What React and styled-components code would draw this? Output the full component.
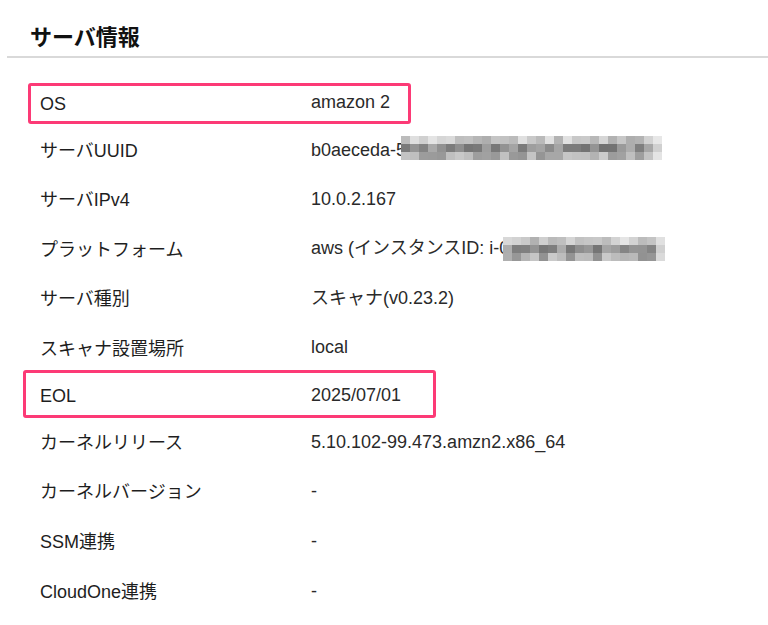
import React from "react";
import styled, { createGlobalStyle } from "styled-components";

const GlobalStyle = createGlobalStyle`
  body {
    margin: 0;
    background: #ffffff;
    font-family: "Liberation Sans", "Noto Sans CJK JP", sans-serif;
    color: #222;
  }
`;

const Page = styled.div`
  width: 768px;
  height: 625px;
  padding-top: 23px;
  box-sizing: border-box;
  overflow: hidden;
`;

const Title = styled.h2`
  margin: 0 0 0 30px;
  font-size: 22px;
  line-height: 30px;
  font-weight: 700;
  color: #111;
`;

const Divider = styled.div`
  margin: 3px 0 0 7px;
  height: 2px;
  background: #d9d9d9;
`;

const List = styled.div`
  margin-top: 22px;
`;

const Row = styled.div`
  position: relative;
  display: grid;
  grid-template-columns: 271px 1fr;
  align-items: center;
  height: ${(p) => p.$h}px;
  padding-left: 40px;
  font-size: 18px;
  line-height: 22px;
  white-space: nowrap;
`;

const Label = styled.div`
  color: #1e1e1e;
`;

const Value = styled.div`
  color: #2a2a2a;
  display: flex;
  align-items: center;
  padding-bottom: 3px;
`;

const Highlight = styled.div`
  position: absolute;
  left: ${(p) => p.$left}px;
  top: ${(p) => p.$top}px;
  width: ${(p) => p.$width}px;
  height: ${(p) => p.$height}px;
  border: 3px solid #fc3a76;
  border-radius: 3px;
  box-sizing: border-box;
  pointer-events: none;
`;

const Mosaic = styled.span`
  display: inline-grid;
  grid-auto-flow: column;
  grid-template-rows: repeat(3, 8px);
  margin-left: ${(p) => p.$shift}px;
  position: relative;
  top: ${(p) => p.$lift}px;
  filter: blur(0.4px);
`;

const Cell = styled.span`
  display: block;
  width: 9px;
`;

// deterministic shades for the pixelated (redacted) part
function shade(seed, i) {
  const v = Math.sin(seed * 97.1 + i * 12.9898) * 43758.5453;
  return v - Math.floor(v);
}

function Redacted({ cols, seed, shift, lift }) {
  const cells = [];
  for (let c = 0; c < cols; c++) {
    for (let r = 0; r < 3; r++) {
      const t = shade(seed, c * 3 + r);
      const base = r === 1 ? 0.42 : r === 0 ? 0.08 : 0.24;
      const edge = c === cols - 1 ? 0.3 : 1;
      const a = (base + t * 0.35) * edge;
      const g = Math.round(245 - a * 170);
      cells.push(
        <Cell key={`${c}-${r}`} style={{ background: `rgb(${g},${g},${g})` }} />
      );
    }
  }
  return (
    <Mosaic $shift={shift} $lift={lift}>
      {cells}
    </Mosaic>
  );
}

const rows = [
  { label: "OS", value: "amazon 2", h: 47, box: { left: 28, top: 3, width: 383, height: 41 } },
  { label: "サーバUUID", value: "b0aeceda-5", h: 48, redact: { cols: 29, seed: 3, shift: -5, lift: -2 } },
  { label: "サーバIPv4", value: "10.0.2.167", h: 50 },
  { label: "プラットフォーム", value: "aws (インスタンスID: i-0", h: 49, redact: { cols: 18, seed: 7, shift: -6, lift: 1 } },
  { label: "サーバ種別", value: "スキャナ(v0.23.2)", h: 50 },
  { label: "スキャナ設置場所", value: "local", h: 49 },
  { label: "EOL", value: "2025/07/01", h: 46, box: { left: 23, top: -3, width: 413, height: 48 } },
  { label: "カーネルリリース", value: "5.10.102-99.473.amzn2.x86_64", h: 48 },
  { label: "カーネルバージョン", value: "-", h: 50 },
  { label: "SSM連携", value: "-", h: 50 },
  { label: "CloudOne連携", value: "-", h: 50 },
];

export default function App() {
  return (
    <Page>
      <GlobalStyle />
      <Title>サーバ情報</Title>
      <Divider />
      <List>
        {rows.map((r) => (
          <Row key={r.label} $h={r.h}>
            <Label>{r.label}</Label>
            <Value>
              <span>{r.value}</span>
              {r.redact && <Redacted {...r.redact} />}
            </Value>
            {r.box && (
              <Highlight
                $left={r.box.left}
                $top={r.box.top}
                $width={r.box.width}
                $height={r.box.height}
              />
            )}
          </Row>
        ))}
      </List>
    </Page>
  );
}
